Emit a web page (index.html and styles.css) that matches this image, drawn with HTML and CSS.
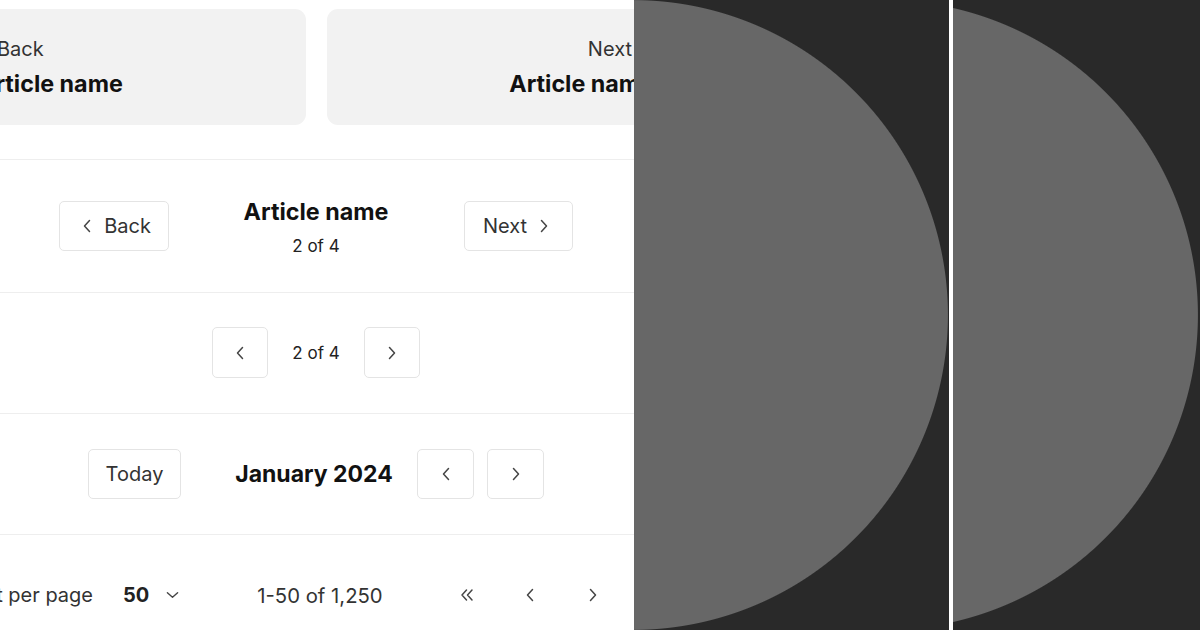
FILE: index.html
```html
<!DOCTYPE html>
<html lang="en">
<head>
<meta charset="utf-8">
<title>Pagination patterns</title>
<link rel="stylesheet" href="styles.css">
</head>
<body>
<div class="page">
  <div class="sheet">
    <div class="column">
      <section class="section section-cards">
        <a class="nav-card nav-card-back">
          <span class="nav-card-label">
            <svg class="chev" viewBox="0 0 8 14" width="8" height="14"><path d="M6.5 1.5 L1.5 7 L6.5 12.5"/></svg>
            <span>Back</span>
          </span>
          <span class="nav-card-title">Article name</span>
        </a>
        <a class="nav-card nav-card-next">
          <span class="nav-card-label">
            <span>Next</span>
            <svg class="chev" viewBox="0 0 8 14" width="8" height="14"><path d="M1.5 1.5 L6.5 7 L1.5 12.5"/></svg>
          </span>
          <span class="nav-card-title">Article name</span>
        </a>
      </section>

      <section class="section section-article">
        <div class="article-bar">
          <button class="btn btn-back">
            <svg class="chev" viewBox="0 0 8 14" width="8" height="14"><path d="M6.5 1.5 L1.5 7 L6.5 12.5"/></svg>
            <span>Back</span>
          </button>
          <div class="article-info">
            <div class="article-title">Article name</div>
            <div class="article-count">2 of 4</div>
          </div>
          <button class="btn btn-next">
            <span>Next</span>
            <svg class="chev" viewBox="0 0 8 14" width="8" height="14"><path d="M1.5 1.5 L6.5 7 L1.5 12.5"/></svg>
          </button>
        </div>
      </section>

      <section class="section section-pager">
        <div class="pager">
          <button class="btn btn-icon btn-icon-sm">
            <svg class="chev" viewBox="0 0 8 14" width="8" height="14"><path d="M6.5 1.5 L1.5 7 L6.5 12.5"/></svg>
          </button>
          <span class="pager-count">2 of 4</span>
          <button class="btn btn-icon btn-icon-sm">
            <svg class="chev" viewBox="0 0 8 14" width="8" height="14"><path d="M1.5 1.5 L6.5 7 L1.5 12.5"/></svg>
          </button>
        </div>
      </section>

      <section class="section section-calendar">
        <div class="calendar-bar">
          <button class="btn btn-today">Today</button>
          <div class="calendar-title">January 2024</div>
          <div class="calendar-nav">
            <button class="btn btn-icon">
              <svg class="chev" viewBox="0 0 8 14" width="8" height="14"><path d="M6.5 1.5 L1.5 7 L6.5 12.5"/></svg>
            </button>
            <button class="btn btn-icon">
              <svg class="chev" viewBox="0 0 8 14" width="8" height="14"><path d="M1.5 1.5 L6.5 7 L1.5 12.5"/></svg>
            </button>
          </div>
        </div>
      </section>

      <section class="section section-table">
        <div class="table-bar">
          <div class="rows-label"><span>Result per page</span></div>
          <div class="rows-select">
            <span class="rows-value">50</span>
            <svg class="chev-down" viewBox="0 0 14 8" width="14" height="8"><path d="M1.5 1.5 L7 6.5 L12.5 1.5"/></svg>
          </div>
          <div class="range">1-50 of 1,250</div>
          <div class="table-nav">
            <button class="ghost">
              <svg class="chev-dbl" viewBox="0 0 14 14" width="14" height="14"><path d="M6.5 2 L2 7 L6.5 12 M12 2 L7.5 7 L12 12"/></svg>
            </button>
            <button class="ghost">
              <svg class="chev" viewBox="0 0 8 14" width="8" height="14"><path d="M6.5 1.5 L1.5 7 L6.5 12.5"/></svg>
            </button>
            <button class="ghost">
              <svg class="chev" viewBox="0 0 8 14" width="8" height="14"><path d="M1.5 1.5 L6.5 7 L1.5 12.5"/></svg>
            </button>
            <button class="ghost">
              <svg class="chev-dbl" viewBox="0 0 14 14" width="14" height="14"><path d="M2 2 L6.5 7 L2 12 M7.5 2 L12 7 L7.5 12"/></svg>
            </button>
          </div>
        </div>
      </section>
    </div>
  </div>
  <div class="thumb thumb-a"></div>
  <div class="thumb-gap"></div>
  <div class="thumb thumb-b"></div>
</div>
</body>
</html>
```

FILE: styles.css
```css
* { box-sizing: border-box; }

html, body {
  margin: 0;
  padding: 0;
  width: 1200px;
  height: 630px;
  overflow: hidden;
  background: #ffffff;
  font-family: "Inter", "Noto Sans", "Liberation Sans", sans-serif;
  color: #333333;
}

.page {
  display: flex;
  width: 1200px;
  height: 630px;
}

.sheet {
  width: 634px;
  flex: none;
  height: 630px;
  overflow: hidden;
  background: #ffffff;
}

.column {
  width: 724px;
  margin-left: -46px;
}

.section {
  border-top: 1px solid #eeeeee;
}

.section:first-child {
  border-top: none;
}

/* Row 1: prev/next cards */
.section-cards {
  display: grid;
  grid-template-columns: 1fr 1fr;
  column-gap: 21px;
  padding: 9px 0 34px;
}

.nav-card {
  display: flex;
  flex-direction: column;
  gap: 7px;
  height: 116px;
  padding: 26px 24px 0;
  background: #f2f2f2;
  border-radius: 11px;
}

.nav-card-next {
  align-items: flex-end;
}

.nav-card-label {
  display: flex;
  align-items: center;
  gap: 11px;
  font-size: 20px;
  line-height: 28px;
  color: #333333;
}

.nav-card-next .nav-card-label {
  gap: 14px;
}

.nav-card-title {
  font-size: 23.3px;
  line-height: 28px;
  font-weight: 700;
  color: #111111;
  white-space: nowrap;
}

/* Buttons */
.btn {
  display: inline-flex;
  align-items: center;
  justify-content: center;
  height: 50px;
  background: #ffffff;
  border: 1px solid #e4e4e4;
  border-radius: 5px;
  font-family: inherit;
  font-size: 20px;
  color: #333333;
  padding: 0;
}

.chev, .chev-down, .chev-dbl {
  fill: none;
  stroke: #454545;
  stroke-width: 1.5;
  stroke-linecap: round;
  stroke-linejoin: round;
  flex: none;
}

/* Row 2: article nav */
.section-article {
  padding: 38px 0 35px;
}

.article-bar {
  width: 514px;
  margin: 0 auto;
  display: grid;
  grid-template-columns: 1fr auto 1fr;
  align-items: center;
}

.btn-back {
  justify-self: start;
  width: 110px;
  gap: 13px;
  padding: 0 18px 0 24px;
  margin-bottom: 3px;
}

.btn-next {
  justify-self: end;
  width: 109px;
  gap: 13px;
  padding: 0 24px 0 18px;
  margin-bottom: 3px;
}

.article-info {
  display: flex;
  flex-direction: column;
  align-items: center;
  gap: 9px;
}

.article-title {
  font-size: 23.3px;
  line-height: 28px;
  font-weight: 700;
  color: #111111;
}

.article-count {
  font-size: 17px;
  line-height: 22px;
  color: #222222;
}

/* Row 3: simple pager */
.section-pager {
  padding: 34px 0 35px;
}

.pager {
  display: flex;
  justify-content: center;
  align-items: center;
  gap: 24px;
}

.btn-icon {
  width: 57px;
}

.btn-icon-sm {
  width: 56px;
  height: 51px;
}

.pager-count {
  font-size: 17px;
  color: #222222;
}

/* Row 4: calendar */
.section-calendar {
  padding: 35px 0 35px;
}

.calendar-bar {
  width: 456px;
  margin: 0 auto;
  display: grid;
  grid-template-columns: 1fr auto 1fr;
  align-items: center;
}

.btn-today {
  justify-self: start;
  width: 93px;
}

.calendar-title {
  font-size: 23px;
  font-weight: 700;
  color: #111111;
  margin-right: 4px;
}

.calendar-nav {
  justify-self: end;
  display: flex;
  gap: 13px;
}

/* Row 5: table footer */
.section-table {
  padding: 35px 0 0;
}

.table-bar {
  display: flex;
  align-items: center;
  height: 50px;
  font-size: 20px;
  color: #333333;
}

.rows-label {
  width: 139px;
  flex: none;
  display: flex;
  justify-content: flex-end;
  white-space: nowrap;
}

.rows-select {
  display: flex;
  align-items: center;
  gap: 17px;
  margin-left: 30px;
}

.rows-value {
  font-weight: 700;
  color: #222222;
}

.chev-down {
  width: 13px;
  height: 8px;
}

.range {
  margin-left: 78px;
  white-space: nowrap;
  font-size: 20.3px;
}

.table-nav {
  display: flex;
  gap: 23px;
  margin-left: 64px;
}

.ghost {
  display: flex;
  align-items: center;
  justify-content: center;
  width: 40px;
  height: 40px;
  padding: 0;
  border: none;
  background: transparent;
}

/* Right preview panels */
.thumb {
  height: 630px;
  background-color: #292929;
}

.thumb-a {
  width: 315px;
  flex: none;
  background-image: radial-gradient(circle 315px at -1px 50%, #676767 314.4px, #292929 315.4px);
}

.thumb-gap {
  width: 4px;
  flex: none;
  background: #ffffff;
}

.thumb-b {
  flex: 1;
  background-image: radial-gradient(circle 315px at -70px 50%, #676767 314.4px, #292929 315.4px);
}
```
